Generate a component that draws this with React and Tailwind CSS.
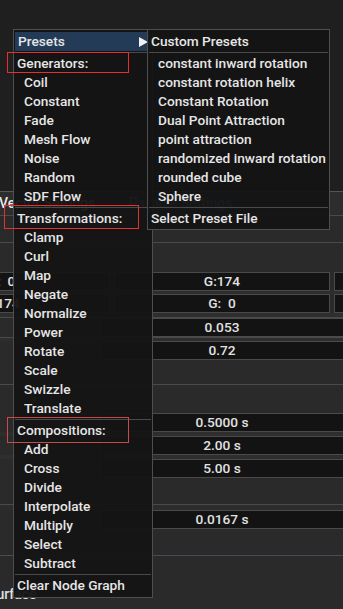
import React from 'react';

const generators = ['Coil', 'Constant', 'Fade', 'Mesh Flow', 'Noise', 'Random', 'SDF Flow'];
const transformations = ['Clamp', 'Curl', 'Map', 'Negate', 'Normalize', 'Power', 'Rotate', 'Scale', 'Swizzle', 'Translate'];
const compositions = ['Add', 'Cross', 'Divide', 'Interpolate', 'Multiply', 'Select', 'Subtract'];
const customPresets = [
  'constant inward rotation',
  'constant rotation helix',
  'Constant Rotation',
  'Dual Point Attraction',
  'point attraction',
  'randomized inward rotation',
  'rounded cube',
  'Sphere',
];

const Sep = () => (
  <div className="h-[3px] flex items-center">
    <div className="h-px w-full bg-[#4a4a4a]" />
  </div>
);

const Header = ({ children }) => (
  <div className="h-[19px] leading-[19px] pl-[2px] whitespace-nowrap">{children}</div>
);

const Item = ({ children }) => (
  <div className="h-[19px] leading-[19px] pl-[9px] whitespace-nowrap">{children}</div>
);

const Slider = ({ text }) => (
  <div className="ml-[100px] w-[244px] h-[19px] shrink-0 border border-[#4a4a4a] bg-[#131313] flex items-center justify-center text-[#e2e2e2] whitespace-pre">
    {text}
  </div>
);

const ColorRow = ({ values }) => (
  <div className="flex gap-[4px] ml-[-106px] h-[19px] shrink-0">
    {values.map((v, i) => (
      <div
        key={i}
        className="w-[216px] shrink-0 border border-[#4a4a4a] bg-[#131313] flex items-center justify-center text-[#e2e2e2] whitespace-pre"
      >
        {v}
      </div>
    ))}
  </div>
);

const Gap = ({ h }) => <div className={`${h} shrink-0 bg-[#2e2e2e]`} />;

export default function App() {
  return (
    <div className="relative w-[343px] h-[609px] overflow-hidden bg-[#2a2a2a] font-[Roboto,sans-serif] text-[13.7px] font-medium text-[#e6e6e6]">
      {/* app behind the popup */}
      <div className="flex flex-col h-full">
        <div className="h-[191px] shrink-0 bg-[#1f1f1f]" />
        <div className="h-[24px] shrink-0 border-t border-[#555] bg-[#2d2d2d] flex items-center">
          <span className="ml-[-1px] text-[14px] text-[#e8e8e8] whitespace-nowrap">Vector Settings</span>
          <div className="ml-[20px] h-[18px] w-[131px] bg-[#1d2b3d] flex items-center justify-center text-[14px] text-[#8a97a8] whitespace-nowrap">
            Particle Settings
          </div>
        </div>
        <div className="h-[28px] shrink-0 border-y border-[#4a4a4a] bg-[#2a2a2a]" />
        <div className="h-[29px] shrink-0" />
        <ColorRow values={['R:  0', 'G:174', '']} />
        <Gap h="h-[3px]" />
        <ColorRow values={['R:174', 'G:  0', '']} />
        <Gap h="h-[4px]" />
        <div className="h-px shrink-0 bg-[#4a4a4a]" />
        <Slider text="0.053" />
        <div className="h-px shrink-0 bg-[#4a4a4a]" />
        <Gap h="h-[3px]" />
        <Slider text="0.72" />
        <div className="h-[25px] shrink-0 border-b border-[#4a4a4a]" />
        <div className="h-[28px] shrink-0 flex items-center">
          <span className="ml-[29px] text-[10px] text-[#777]">▼</span>
        </div>
        <Slider text="0.5000 s" />
        <Gap h="h-[4px]" />
        <Slider text="2.00 s" />
        <Gap h="h-[4px]" />
        <Slider text="5.00 s" />
        <div className="h-[27px] shrink-0 border-b border-[#4a4a4a]" />
        <div className="h-[5px] shrink-0 bg-[#2c2c2c]" />
        <Slider text="0.0167 s" />
        <div className="h-[27px] shrink-0 border-b border-[#4a4a58]" />
        <div className="h-[23px] shrink-0 flex items-center">
          <span className="ml-[29px] text-[10px] leading-none text-[#777]">▼</span>
        </div>
        <div className="h-[30px] shrink-0 flex items-center">
          <span className="ml-[-12px] text-[14px] text-[#e0e0e0] whitespace-nowrap">Surface</span>
        </div>
      </div>

      {/* main context menu */}
      <div className="absolute left-[13px] top-[29px] w-[140px] h-[569px] border border-[#4e4e4e] bg-[#141414]/95 px-px pt-[2px]">
        <div className="h-[19px] flex items-center justify-between bg-[#243b58] pl-[3px] pr-[3px]">
          <span>Presets</span>
          <svg width="9" height="10" viewBox="0 0 9 10">
            <polygon points="0,0 9,5 0,10" fill="#f2f2f2" />
          </svg>
        </div>
        <Sep />
        <Header>Generators:</Header>
        {generators.map((g) => (
          <Item key={g}>{g}</Item>
        ))}
        <Sep />
        <Header>Transformations:</Header>
        {transformations.map((t) => (
          <Item key={t}>{t}</Item>
        ))}
        <Sep />
        <Header>Compositions:</Header>
        {compositions.map((c) => (
          <Item key={c}>{c}</Item>
        ))}
        <Sep />
        <Header>Clear Node Graph</Header>
      </div>

      {/* presets submenu */}
      <div className="absolute left-[147px] top-[29px] w-[183px] h-[201px] border border-[#4e4e4e] bg-[#141414]/95 px-px pt-[2px]">
        <Header>Custom Presets</Header>
        <Sep />
        {customPresets.map((p) => (
          <Item key={p}>{p}</Item>
        ))}
        <Sep />
        <Header>Select Preset File</Header>
      </div>

      {/* annotation boxes */}
      <div className="absolute left-[7px] top-[52px] w-[122px] h-[21px] border border-[#e5302e]" />
      <div className="absolute left-[4px] top-[205px] w-[135px] h-[24px] border border-[#e5302e]" />
      <div className="absolute left-[7px] top-[417px] w-[122px] h-[26px] border border-[#c94a4a]" />
    </div>
  );
}
